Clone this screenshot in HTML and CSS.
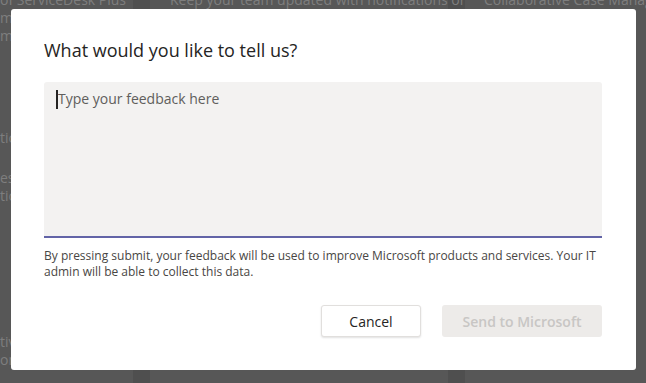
FILE: index.html
```html
<!DOCTYPE html>
<html lang="en">

<head>
    <meta charset="UTF-8">
    <meta name="viewport" content="width=device-width, initial-scale=1.0">
    <title>Feedback</title>
    <link rel="stylesheet" href="styles.css">
</head>

<body>

    <!-- Page behind the dialog -->
    <div class="page">
        <div class="column col-left">
            <p>of ServiceDesk Plus</p>
            <p>manage</p>
            <p>more</p>
            <p class="gap-top">tickets</p>
            <p class="gap-small">es</p>
            <p class="gap-bottom">tics</p>
            <p>tive</p>
            <p>on</p>
        </div>
        <div class="column col-mid">
            <p>Keep your team updated with notifications on</p>
        </div>
        <div class="column col-right">
            <p>Collaborative Case Management</p>
            <p>Public apps</p>
            <p>Works for all</p>
            <p class="gap-top">Content</p>
            <p>Teams</p>
            <p>Out of the box</p>
            <p class="gap-bottom">Team chat</p>
            <p>Run a desk</p>
            <p>Queue</p>
        </div>
    </div>

    <!-- Feedback dialog -->
    <div class="overlay">
        <div class="dialog">
            <h1 class="dialog-title">What would you like to tell us?</h1>

            <div class="feedback-box">
                <span class="caret"></span><span class="placeholder">Type your feedback here</span>
            </div>

            <p class="disclaimer">By pressing submit, your feedback will be used to improve Microsoft products and services. Your IT admin will be able to collect this data.</p>

            <div class="actions">
                <button class="btn btn-cancel">Cancel</button>
                <button class="btn btn-send" disabled>Send to Microsoft</button>
            </div>
        </div>
    </div>

</body>

</html>
```

FILE: styles.css
```css
/* General Page Styles */
body {
    margin: 0;
    width: 646px;
    height: 383px;
    overflow: hidden;
    position: relative;
    background: #555555;
    font-family: 'Open Sans', 'Noto Sans', sans-serif;
}

/* Background page (dimmed) */
.page {
    display: grid;
    grid-template-columns: 133px 298px 181px;
    column-gap: 17px;
    height: calc(100% + 9px);
    margin-top: -9px;
    background: #4f4f4f;
}

.column {
    background: #575757;
    color: #7e7e7e;
    font-size: 14px;
    line-height: 18px;
    white-space: nowrap;
}

.column p {
    margin: 0;
}

.col-mid {
    padding-left: 20px;
}

.col-right {
    padding-left: 19px;
}

.gap-top {
    margin-top: 84px !important;
}

.gap-small {
    margin-top: 22px !important;
}

.gap-bottom {
    margin-bottom: 128px !important;
}

/* Overlay + dialog */
.overlay {
    position: absolute;
    inset: 0;
    padding: 9px 0 0 11px;
}

.dialog {
    width: 625px;
    height: 361px;
    box-sizing: border-box;
    padding: 29px 34px 33px 33px;
    background: #ffffff;
    border-radius: 3px;
    display: flex;
    flex-direction: column;
}

.dialog-title {
    margin: 0;
    font-size: 18px;
    line-height: 24px;
    font-weight: 500;
    color: #252423;
}

/* Text area */
.feedback-box {
    margin-top: 20px;
    height: 140px;
    background: #f3f2f1;
    border-radius: 3px 3px 0 0;
    border-bottom: 2px solid #6264a7;
    padding: 7px 12px;
    display: flex;
    align-items: flex-start;
    font-size: 14px;
    line-height: 20px;
}

.caret {
    width: 2px;
    height: 19px;
    margin-top: 1px;
    background: #252423;
}

.placeholder {
    color: #605e5c;
}

/* Disclaimer */
.disclaimer {
    margin: 10px 0 0;
    font-size: 12px;
    line-height: 16px;
    color: #484644;
}

/* Buttons */
.actions {
    margin-top: auto;
    display: flex;
    justify-content: flex-end;
    gap: 21px;
}

.btn {
    height: 32px;
    font-family: inherit;
    font-size: 14px;
    font-weight: 500;
    border-radius: 3px;
    padding: 0;
}

.btn-cancel {
    width: 100px;
    background: #ffffff;
    color: #252423;
    border: 1px solid #e1dfdd;
    box-shadow: 0 1px 2px rgba(0, 0, 0, 0.12);
}

.btn-send {
    width: 160px;
    background: #edebe9;
    color: #c8c6c4;
    font-weight: 600;
    border: none;
}
```
